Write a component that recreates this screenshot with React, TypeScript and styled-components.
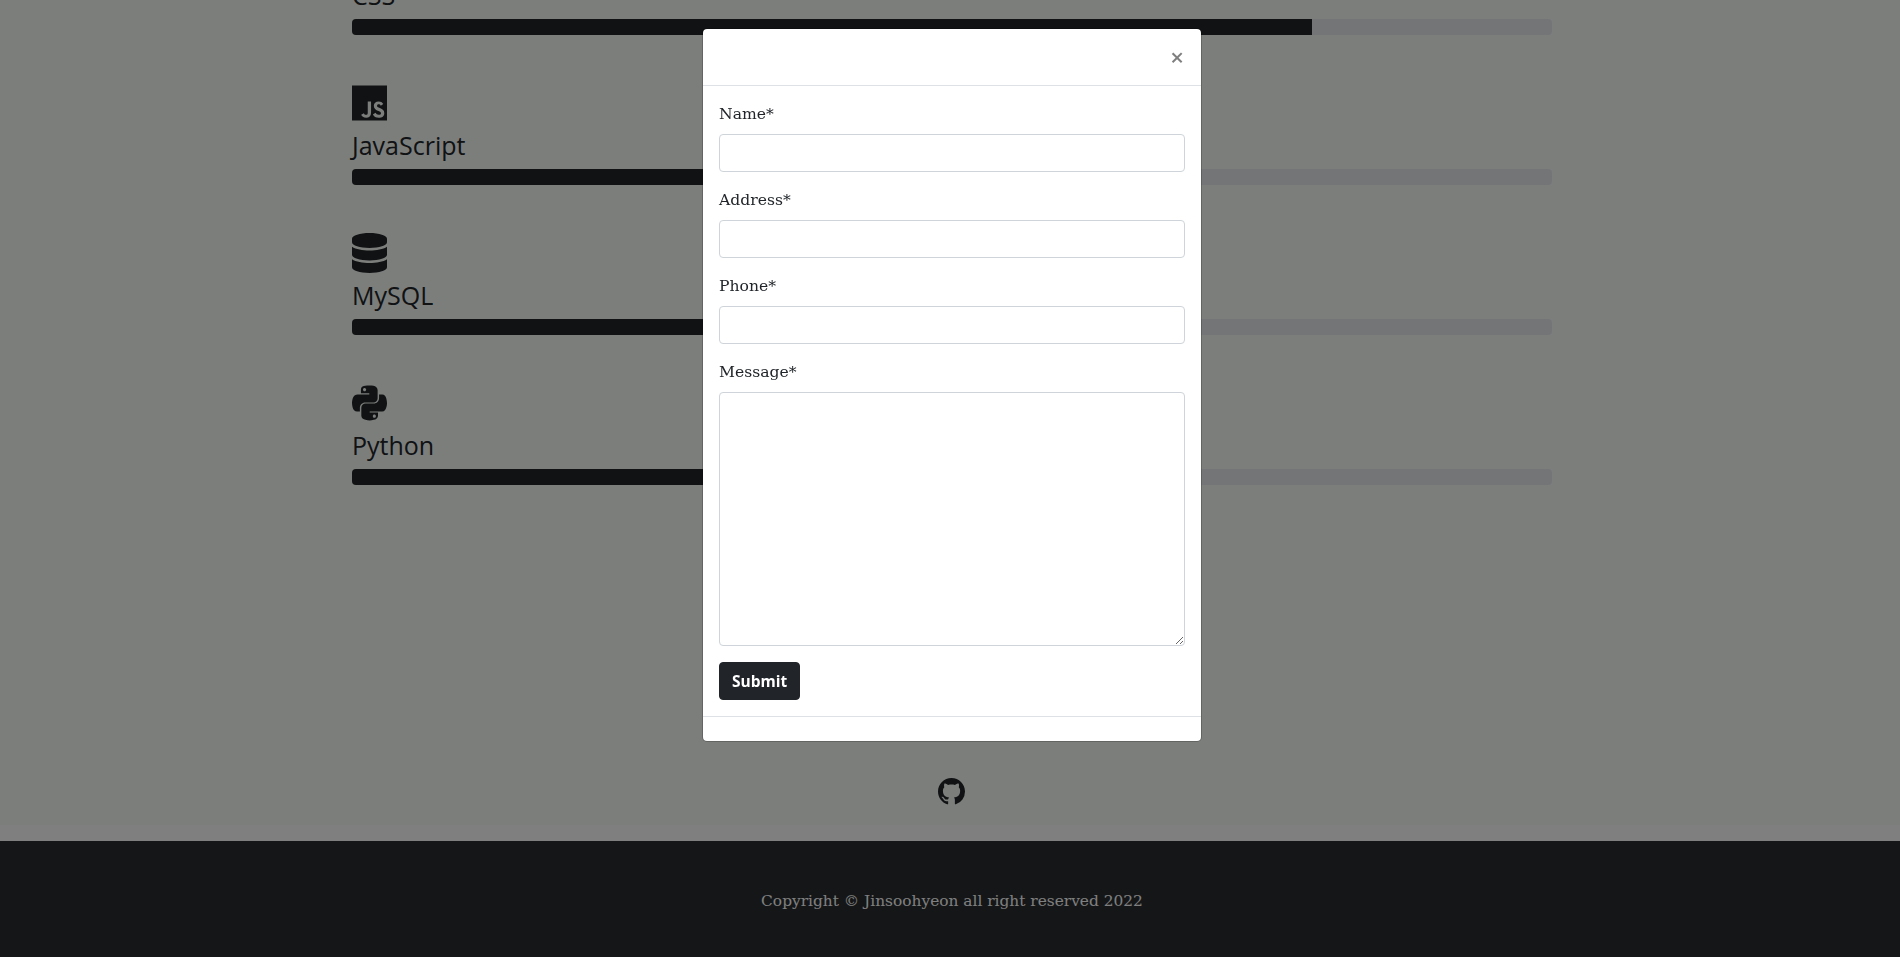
import React from 'react';
import styled, { createGlobalStyle } from 'styled-components';
import { FaDatabase, FaJs, FaPython } from 'react-icons/fa';
import { BsGithub } from 'react-icons/bs';

const GlobalStyle = createGlobalStyle`
  html, body {
    margin: 0;
    height: 100%;
    overflow: hidden;
    background: #fff;
  }
  * {
    box-sizing: border-box;
  }
`;

const skills = [
  { name: 'CSS', level: 80, icon: null },
  { name: 'JavaScript', level: 65, icon: <FaJs /> },
  { name: 'MySQL', level: 60, icon: <FaDatabase /> },
  { name: 'Python', level: 60, icon: <FaPython /> },
];

const fields = ['Name*', 'Address*', 'Phone*'];

const App = () => {
  return (
    <Page>
      <GlobalStyle />
      <Content>
        <SkillList>
          {skills.map((skill) => (
            <Skill key={skill.name}>
              <SkillIcon>{skill.icon}</SkillIcon>
              <SkillName>{skill.name}</SkillName>
              <Track>
                <Fill style={{ width: `${skill.level}%` }} />
              </Track>
            </Skill>
          ))}
        </SkillList>
        <GithubLink href="#" aria-label="Github">
          <BsGithub />
        </GithubLink>
      </Content>
      <Footer>Copyright © Jinsoohyeon all right reserved 2022</Footer>

      <Backdrop />
      <ModalWrap>
        <Modal>
          <ModalHeader>
            <CloseButton aria-label="Close">×</CloseButton>
          </ModalHeader>
          <ModalBody>
            {fields.map((field) => (
              <Field key={field}>
                <Label>{field}</Label>
                <Input type="text" />
              </Field>
            ))}
            <Field>
              <Label>Message*</Label>
              <TextArea />
            </Field>
            <Submit type="button">Submit</Submit>
          </ModalBody>
          <ModalFooter />
        </Modal>
      </ModalWrap>
    </Page>
  );
};

const Page = styled.div`
  height: 957px;
  overflow: hidden;
  font-family: 'DejaVu Serif', serif;
`;

const Content = styled.main`
  height: 825px;
  padding-left: 4px;
  background: #f8fcf8;
  display: flex;
  flex-direction: column;
  align-items: center;
`;

const SkillList = styled.section`
  width: 1200px;
  margin-top: -67px;
  display: flex;
  flex-direction: column;
  gap: 48px;
`;

const Skill = styled.div`
  height: 102px;
  display: flex;
  flex-direction: column;
`;

const SkillIcon = styled.div`
  height: 40px;
  color: #212529;
  svg {
    display: block;
    width: 35px;
    height: 40px;
  }
`;

const SkillName = styled.h4`
  margin: 8px 0 0;
  height: 38px;
  font-family: 'Open Sans', sans-serif;
  font-size: 25px;
  font-weight: 400;
  line-height: 29px;
  color: #212529;
`;

const Track = styled.div`
  height: 16px;
  border-radius: 4px;
  background: #e9ebee;
  overflow: hidden;
`;

const Fill = styled.div`
  height: 100%;
  background: #212529;
`;

const GithubLink = styled.a`
  margin: 293px 2px 0 0;
  display: block;
  font-size: 27px;
  line-height: 0;
  color: #212529;
`;

const Footer = styled.footer`
  margin-top: 16px;
  height: 116px;
  padding: 4px 0 0 4px;
  display: flex;
  align-items: center;
  justify-content: center;
  background: #282c2f;
  color: #fff;
  font-size: 15.4px;
`;

const Backdrop = styled.div`
  position: fixed;
  inset: 0;
  background: rgba(0, 0, 0, 0.5);
`;

const ModalWrap = styled.div`
  position: fixed;
  inset: 0;
  padding: 28px 0 0 4px;
  display: flex;
  justify-content: center;
  align-items: flex-start;
`;

const Modal = styled.div`
  width: 500px;
  display: flex;
  flex-direction: column;
  background: #fff;
  background-clip: padding-box;
  border: 1px solid rgba(0, 0, 0, 0.2);
  border-radius: 5px;
  color: #212529;
`;

const ModalHeader = styled.div`
  height: 57px;
  padding: 0 17px;
  display: flex;
  align-items: center;
  justify-content: flex-end;
  border-bottom: 1px solid #dee2e6;
`;

const CloseButton = styled.button`
  padding: 0;
  border: 0;
  background: transparent;
  opacity: 0.5;
  color: #000;
  font-family: 'Open Sans', sans-serif;
  font-size: 24px;
  font-weight: 600;
  line-height: 24px;
`;

const ModalBody = styled.form`
  padding: 16px;
  display: flex;
  flex-direction: column;
  align-items: flex-start;
`;

const Field = styled.div`
  width: 100%;
  margin-bottom: 16px;
`;

const Label = styled.label`
  display: block;
  height: 24px;
  margin-bottom: 8px;
  font-size: 15.6px;
  line-height: 24px;
`;

const Input = styled.input`
  display: block;
  width: 100%;
  height: 38px;
  border: 1px solid #ced4da;
  border-radius: 4px;
  background: #fff;
`;

const TextArea = styled.textarea`
  display: block;
  width: 100%;
  height: 254px;
  border: 1px solid #ced4da;
  border-radius: 4px;
  background: #fff;
`;

const Submit = styled.button`
  height: 38px;
  padding: 0 12px;
  border: 1px solid #212529;
  border-radius: 4px;
  background: #212529;
  color: #fff;
  font-family: 'Open Sans', sans-serif;
  font-size: 15.5px;
  font-weight: 700;
`;

const ModalFooter = styled.div`
  height: 25px;
  border-top: 1px solid #dee2e6;
`;

export default App;
